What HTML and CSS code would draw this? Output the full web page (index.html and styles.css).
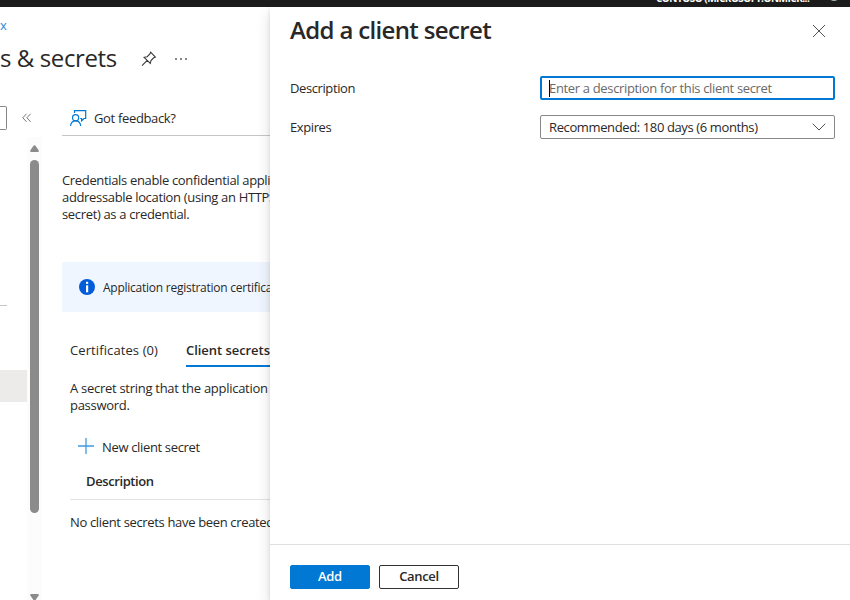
FILE: index.html
```html
<!DOCTYPE html>
<html lang="en">
<head>
    <meta charset="UTF-8">
    <meta name="viewport" content="width=device-width, initial-scale=1.0">
    <title>Certificates &amp; secrets</title>
    <link rel="stylesheet" href="styles.css">
</head>
<body>
    <header class="topbar">
        <span class="tenant">CONTOSO (MICROSOFT.ONMICR...</span>
        <span class="avatar"></span>
    </header>

    <div class="portal">
        <div class="page">
            <div class="breadcrumb"><a href="#">x</a></div>
            <div class="page-title">
                <h1>s &amp; secrets</h1>
                <svg class="pin" width="16" height="16" viewBox="0 0 16 16">
                    <path d="M9.6 1.2 L14.4 6 L12.7 6.8 L10 9.5 L9.3 12.5 L6.2 9.4 L3.1 6.3 L6.2 5.7 L8.9 3 Z M6.2 9.4 L1 14.6"/>
                </svg>
                <span class="more"><i></i><i></i><i></i></span>
            </div>

            <div class="columns">
                <nav class="sidebar">
                    <div class="search-row">
                        <div class="search"></div>
                        <svg width="10" height="10" viewBox="0 0 10 10">
                            <path d="M4.5 .8 L.8 4.8 L4.5 8.8 M8.6 .8 L4.9 4.8 L8.6 8.8"/>
                        </svg>
                    </div>
                    <div class="menu-row">
                        <div class="menu">
                            <div class="separator"></div>
                            <div class="selected"></div>
                        </div>
                        <div class="scrollbar">
                            <svg width="9" height="8" viewBox="0 0 9 8"><path d="M3.7 .6 Q4.5 -.2 5.3 .6 L8.8 5.5 Q9 7 8 7 L1 7 Q0 7 .2 5.5 Z"/></svg>
                            <div class="thumb"></div>
                            <svg class="down" width="9" height="8" viewBox="0 0 9 8"><path d="M1 0 L8 0 Q9 0 8.8 1.3 L5.3 6.4 Q4.5 7.2 3.7 6.4 L.2 1.3 Q0 0 1 0 Z"/></svg>
                        </div>
                    </div>
                </nav>

                <main class="content">
                    <div class="command-bar">
                        <svg width="17" height="17" viewBox="0 0 17 17">
                            <circle cx="5.6" cy="7.8" r="3.1"/>
                            <path d="M.6 16 C.8 12.8 2.8 10.9 5.6 10.9 C8.4 10.9 10.4 12.8 10.7 16 M4.5 3 V.7 H15.7 V8.5 H14 L11.6 10.9 V8.5 H10.2"/>
                        </svg>
                        <span>Got feedback?</span>
                    </div>
                    <p class="intro">Credentials enable confidential applications<br>addressable location (using an HTTPS<br>secret) as a credential.</p>
                    <div class="info-box">
                        <svg width="16" height="16" viewBox="0 0 16 16">
                            <circle cx="8" cy="8" r="8"/>
                            <rect x="7" y="6.3" width="2.2" height="7"/>
                            <rect x="7" y="2.8" width="2.2" height="2.1"/>
                        </svg>
                        <span>Application registration certificates</span>
                    </div>
                    <div class="tabs">
                        <span class="tab">Certificates (0)</span>
                        <span class="tab active">Client secrets</span>
                    </div>
                    <p class="hint">A secret string that the application<br>password.</p>
                    <div class="new-secret">
                        <svg width="16" height="16" viewBox="0 0 16 16"><path d="M8 0 V16 M0 8 H16"/></svg>
                        <span>New client secret</span>
                    </div>
                    <div class="table-head">Description</div>
                    <div class="table-empty">No client secrets have been created</div>
                </main>
            </div>
        </div>

        <section class="blade">
            <div class="blade-header">
                <h2>Add a client secret</h2>
                <svg width="14" height="14" viewBox="0 0 14 14"><path d="M1 1 L13 13 M13 1 L1 13"/></svg>
            </div>
            <div class="blade-body">
                <div class="field">
                    <span class="label">Description</span>
                    <div class="input focused"><span class="caret"></span><span>Enter a description for this client secret</span></div>
                </div>
                <div class="field">
                    <span class="label">Expires</span>
                    <div class="input select">
                        <span>Recommended: 180 days (6 months)</span>
                        <svg width="14" height="8" viewBox="0 0 14 8"><path d="M.7 .7 L7 7 L13.3 .7"/></svg>
                    </div>
                </div>
            </div>
            <div class="blade-footer">
                <button class="primary">Add</button>
                <button>Cancel</button>
            </div>
        </section>
    </div>
</body>
</html>
```

FILE: styles.css
```css
* {
    box-sizing: border-box;
}
body {
    margin: 0;
    width: 850px;
    height: 600px;
    overflow: hidden;
    background: #fff;
    color: #292827;
    font: 13px/17px "Open Sans", "Noto Sans", sans-serif;
    letter-spacing: -0.34px;
    white-space: nowrap;
}
h1, h2, p {
    margin: 0;
}
svg {
    display: block;
    flex: none;
    fill: none;
    stroke: #505050;
}

/* top bar */
.topbar {
    height: 7px;
    overflow: hidden;
    display: flex;
    justify-content: flex-end;
    align-items: flex-end;
    gap: 17px;
    padding: 0 10px 5px 0;
    background: #1b1b1b;
}
.tenant {
    width: 155px;
    color: #fff;
    font-size: 10px;
    font-weight: 700;
    line-height: 8px;
    letter-spacing: -0.5px;
}
.avatar {
    width: 12px;
    height: 12px;
    border-radius: 50%;
    margin-bottom: 1px;
    background: #a8b8c0;
}

.portal {
    display: flex;
    height: 593px;
}
.page {
    width: 270px;
    overflow: hidden;
}

/* title */
.breadcrumb {
    height: 36px;
    padding-top: 10px;
}
.breadcrumb a {
    color: #2b88d8;
    text-decoration: none;
}
.page-title {
    display: flex;
    align-items: center;
    height: 32px;
}
h1 {
    width: 141px;
    margin-top: -2px;
    font-size: 24px;
    font-weight: 400;
    line-height: 32px;
    letter-spacing: -0.4px;
}
.pin {
    stroke: #3b3a39;
    stroke-width: 1.1;
}
.more {
    display: flex;
    gap: 3px;
    margin-left: 18px;
}
.more i {
    width: 2px;
    height: 2px;
    background: #888;
}

/* sidebar */
.columns {
    display: flex;
    height: 525px;
}
.sidebar {
    width: 42px;
    display: flex;
    flex-direction: column;
}
.search-row {
    display: flex;
    flex: none;
    align-items: center;
    gap: 15px;
    height: 62px;
    padding-top: 24px;
}
.search-row svg {
    stroke: #777;
}
.search {
    width: 7px;
    height: 24px;
    border: 1px solid #8a8886;
    border-left: 0;
    border-radius: 0 2px 2px 0;
}
.menu-row {
    display: flex;
    flex: 1;
}
.menu {
    width: 27px;
    padding-top: 168px;
}
.separator {
    width: 7px;
    height: 1px;
    background: #c8c6c4;
}
.selected {
    height: 32px;
    margin-top: 64px;
    background: #edebe9;
}
.scrollbar {
    width: 15px;
    display: flex;
    flex-direction: column;
    align-items: center;
    padding: 8px 1px 0 0;
    background: #fcfcfc;
}
.scrollbar svg {
    fill: #8b8b8b;
    stroke: none;
}
.thumb {
    flex: none;
    width: 9px;
    height: 353px;
    margin-top: 7px;
    border-radius: 5px;
    background: #8b8b8b;
}
.scrollbar .down {
    margin-top: 81px;
}

/* content */
.content {
    padding-left: 20px;
    width: 228px;
}
.command-bar {
    display: flex;
    align-items: center;
    gap: 7px;
    height: 61px;
    padding: 26px 0 0 8px;
    border-bottom: 1px solid #c8c6c4;
}
.command-bar svg {
    stroke: #0078d4;
    stroke-width: 1.2;
}
.intro {
    margin-top: 36px;
}
.info-box {
    display: flex;
    align-items: center;
    gap: 8px;
    height: 50px;
    margin-top: 39px;
    padding-left: 17px;
    border-radius: 2px 0 0 2px;
    background: #f0f6ff;
    font-size: 12px;
    letter-spacing: -0.25px;
}
.info-box svg {
    fill: #015cda;
    stroke: none;
}
.info-box rect {
    fill: #fff;
}
.tabs {
    display: flex;
    gap: 28px;
    margin: 30px 0 0 8px;
    letter-spacing: 0.1px;
}
.tab {
    height: 25px;
}
.tab.active {
    flex: 1;
    border-bottom: 2px solid #0078d4;
    font-weight: 600;
    letter-spacing: -0.05px;
}
.hint {
    margin: 13px 0 0 8px;
    letter-spacing: -0.28px;
}
.new-secret {
    display: flex;
    align-items: center;
    gap: 8px;
    height: 17px;
    margin: 25px 0 0 16px;
}
.new-secret svg {
    margin-top: -3px;
    stroke: #3f9ae0;
    stroke-width: 1.3;
}
.table-head {
    height: 44px;
    margin-left: 8px;
    padding: 17px 0 0 16px;
    border-bottom: 1px solid #e3e2e1;
    font-weight: 600;
    letter-spacing: -0.4px;
}
.table-empty {
    margin: 14px 0 0 8px;
}

/* blade */
.blade {
    position: relative;
    width: 580px;
    display: flex;
    flex-direction: column;
    background: #fff;
    box-shadow: 0 6px 14px rgba(0, 0, 0, 0.13), 0 1px 4px rgba(0, 0, 0, 0.11);
    clip-path: inset(0 0 0 -20px);
}
.blade-header {
    display: flex;
    justify-content: space-between;
    align-items: center;
    height: 48px;
    padding: 0 24px 0 20px;
}
h2 {
    margin-top: -2px;
    font-size: 24px;
    font-weight: 600;
    line-height: 32px;
    letter-spacing: -0.65px;
}
.blade-body {
    flex: 1;
    padding: 21px 15px 0 20px;
}
.field {
    display: flex;
    align-items: center;
    height: 24px;
    margin-bottom: 15px;
}
.label {
    width: 250px;
    letter-spacing: -0.4px;
}
.input {
    display: flex;
    align-items: center;
    width: 295px;
    height: 24px;
    border: 1px solid #8a8886;
    border-radius: 2px;
    padding: 0 8px;
}
.input.focused {
    border: 2px solid #0078d4;
    padding: 0 7px;
    color: #6b6967;
}
.caret {
    width: 1px;
    height: 17px;
    margin-right: -1px;
    background: #000;
}
.select {
    justify-content: space-between;
    letter-spacing: -0.38px;
}
.blade-footer {
    display: flex;
    gap: 9px;
    height: 56px;
    padding: 20px;
    border-top: 1px solid #e1dfdd;
}
button {
    width: 80px;
    height: 24px;
    padding: 0 0 2px;
    border: 1px solid #323130;
    border-radius: 2px;
    background: #fff;
    color: #292827;
    font: 600 13px/17px "Open Sans", "Noto Sans", sans-serif;
    letter-spacing: -0.34px;
}
button.primary {
    border-color: #0078d4;
    background: #0078d4;
    color: #fff;
}
```
